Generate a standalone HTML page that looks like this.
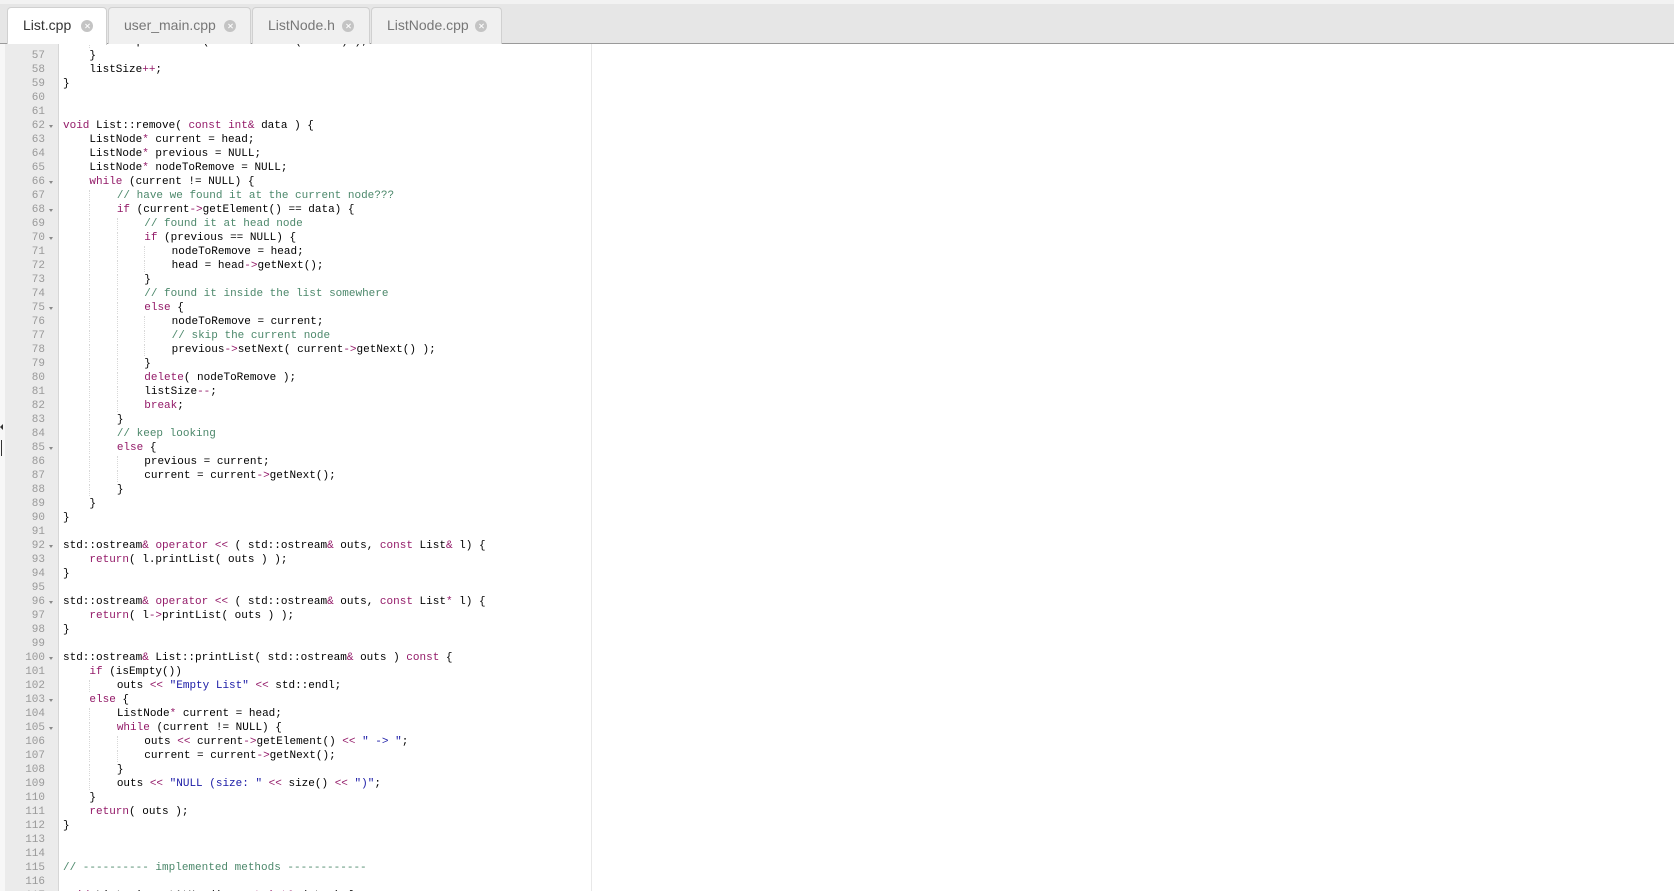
<!DOCTYPE html>
<html><head><meta charset="utf-8"><style>
*{margin:0;padding:0;box-sizing:border-box}
body{width:1674px;height:891px;overflow:hidden;background:#fff;font-family:"Liberation Sans",sans-serif;position:relative}
#top{position:absolute;left:0;top:0;width:1674px;height:4px;background:#f2f2f2}
#bar{position:absolute;left:0;top:4px;width:1674px;height:39px;background:#e6e6e6}
#barb{position:absolute;left:0;top:43px;width:1674px;height:1px;background:#9a9a9a}
.tab{position:absolute;top:7px;height:37px;background:#f0f0f0;border:1px solid #d0d0d0;border-bottom:none;border-radius:4px 4px 0 0;font-size:14px;color:#777;line-height:34px;padding-left:15px}
.tab.a{background:#fff;color:#333;height:38px}
.x{position:absolute;top:12px;width:12px;height:12px;border-radius:50%;background:#c4c4c4}
.x:before,.x:after{content:"";position:absolute;left:5.5px;top:3px;width:1.2px;height:6px;background:#fff;transform:rotate(45deg)}
.x:after{transform:rotate(-45deg)}
#lstrip{position:absolute;left:0;top:44px;width:5px;height:847px;background:#f7f7f7}
#gut{position:absolute;left:5px;top:44px;width:53px;height:847px;background:#ebebeb;overflow:hidden}
#gutb{position:absolute;left:58px;top:44px;width:1px;height:847px;background:#d6d6d6}
#pm{position:absolute;left:591px;top:44px;width:1px;height:847px;background:#e8e8e8}
#code{position:absolute;left:63px;top:44px;width:1600px;height:847px;overflow:hidden}
.ln,.cl{position:absolute;left:0;top:-9px;font-family:"Liberation Mono",monospace;font-size:11px;line-height:14px;white-space:pre}
.ln{width:40px;text-align:right;color:#999;left:0}
.cl{color:#000}
.f{position:absolute;left:44px;width:0;height:0;border-left:2.5px solid transparent;border-right:2.5px solid transparent;border-top:3px solid #888}
.k{color:#931a68}.c{color:#4c886b}.s{color:#1a1aa6}.o{color:#931a68}.n{color:#444}
.g{border-left:1px dotted #d8d8d8}
</style></head><body>
<div id="top"></div><div id="bar"></div><div id="barb"></div>
<div class="tab a" style="left:7px;width:100px">List.cpp<span class="x" style="left:73px"></span></div>
<div class="tab" style="left:108px;width:143px">user_main.cpp<span class="x" style="left:115px"></span></div>
<div class="tab" style="left:252px;width:118px">ListNode.h<span class="x" style="left:89px"></span></div>
<div class="tab" style="left:371px;width:131px">ListNode.cpp<span class="x" style="left:103px"></span></div>
<div id="lstrip"><div style="position:absolute;left:0;top:380px;border-top:3px solid transparent;border-bottom:3px solid transparent;border-right:3px solid #333"></div><div style="position:absolute;left:1px;top:396px;width:1px;height:16px;background:#333"></div></div>
<div id="gut"><div class="ln" id="lns"></div></div>
<div id="gutb"></div><div id="pm"></div>
<div id="code"><div class="cl" id="cl"></div></div>
<script>
var L=[
'        temp<span class="o">-></span>setNext( <span class="k">new</span> ListNode( data ) );',
'    }',
'    listSize<span class="o">++</span>;',
'}',
'',
'',
'<span class="k">void</span> List::remove( <span class="k">const</span> <span class="k">int</span><span class="o">&</span> data ) {',
'    ListNode<span class="o">*</span> current = head;',
'    ListNode<span class="o">*</span> previous = NULL;',
'    ListNode<span class="o">*</span> nodeToRemove = NULL;',
'    <span class="k">while</span> (current != NULL) {',
'        <span class="c">// have we found it at the current node???</span>',
'        <span class="k">if</span> (current<span class="o">-></span>getElement() == data) {',
'            <span class="c">// found it at head node</span>',
'            <span class="k">if</span> (previous == NULL) {',
'                nodeToRemove = head;',
'                head = head<span class="o">-></span>getNext();',
'            }',
'            <span class="c">// found it inside the list somewhere</span>',
'            <span class="k">else</span> {',
'                nodeToRemove = current;',
'                <span class="c">// skip the current node</span>',
'                previous<span class="o">-></span>setNext( current<span class="o">-></span>getNext() );',
'            }',
'            <span class="k">delete</span>( nodeToRemove );',
'            listSize<span class="o">--</span>;',
'            <span class="k">break</span>;',
'        }',
'        <span class="c">// keep looking</span>',
'        <span class="k">else</span> {',
'            previous = current;',
'            current = current<span class="o">-></span>getNext();',
'        }',
'    }',
'}',
'',
'std::ostream<span class="o">&</span> <span class="k">operator</span> <span class="o"><<</span> ( std::ostream<span class="o">&</span> outs, <span class="k">const</span> List<span class="o">&</span> l) {',
'    <span class="k">return</span>( l.printList( outs ) );',
'}',
'',
'std::ostream<span class="o">&</span> <span class="k">operator</span> <span class="o"><<</span> ( std::ostream<span class="o">&</span> outs, <span class="k">const</span> List<span class="o">*</span> l) {',
'    <span class="k">return</span>( l<span class="o">-></span>printList( outs ) );',
'}',
'',
'std::ostream<span class="o">&</span> List::printList( std::ostream<span class="o">&</span> outs ) <span class="k">const</span> {',
'    <span class="k">if</span> (isEmpty())',
'        outs <span class="o"><<</span> <span class="s">"Empty List"</span> <span class="o"><<</span> std::endl;',
'    <span class="k">else</span> {',
'        ListNode<span class="o">*</span> current = head;',
'        <span class="k">while</span> (current != NULL) {',
'            outs <span class="o"><<</span> current<span class="o">-></span>getElement() <span class="o"><<</span> <span class="s">" -> "</span>;',
'            current = current<span class="o">-></span>getNext();',
'        }',
'        outs <span class="o"><<</span> <span class="s">"NULL (size: "</span> <span class="o"><<</span> size() <span class="o"><<</span> <span class="s">")"</span>;',
'    }',
'    <span class="k">return</span>( outs );',
'}',
'',
'',
'<span class="c">// ---------- implemented methods ------------</span>',
'',
'<span class="k">void</span> List::insertAtHead( <span class="k">const</span> <span class="k">int</span><span class="o">&</span> data ) {'];
var folds=[62,66,68,70,75,85,92,96,100,103,105];
var ln='',cl='',fh='';
for(var i=0;i<L.length;i++){var n=56+i;ln+=n+'\n';
var t=L[i];var m=t.match(/^ */)[0].length;var lv=Math.floor(m/4);var pre='';
for(var j=0;j<lv;j++){pre+=(j==0?'    ':'<span class="g"> </span>   ');}
cl+=pre+t.slice(lv*4)+'\n';
if(folds.indexOf(n)>=0)fh+='<div class="f" style="top:'+(i*14-9+6)+'px"></div>';}
document.getElementById('lns').textContent=ln;
document.getElementById('lns').insertAdjacentHTML('afterend',fh);
document.getElementById('cl').innerHTML=cl;
</script>
</body></html>
